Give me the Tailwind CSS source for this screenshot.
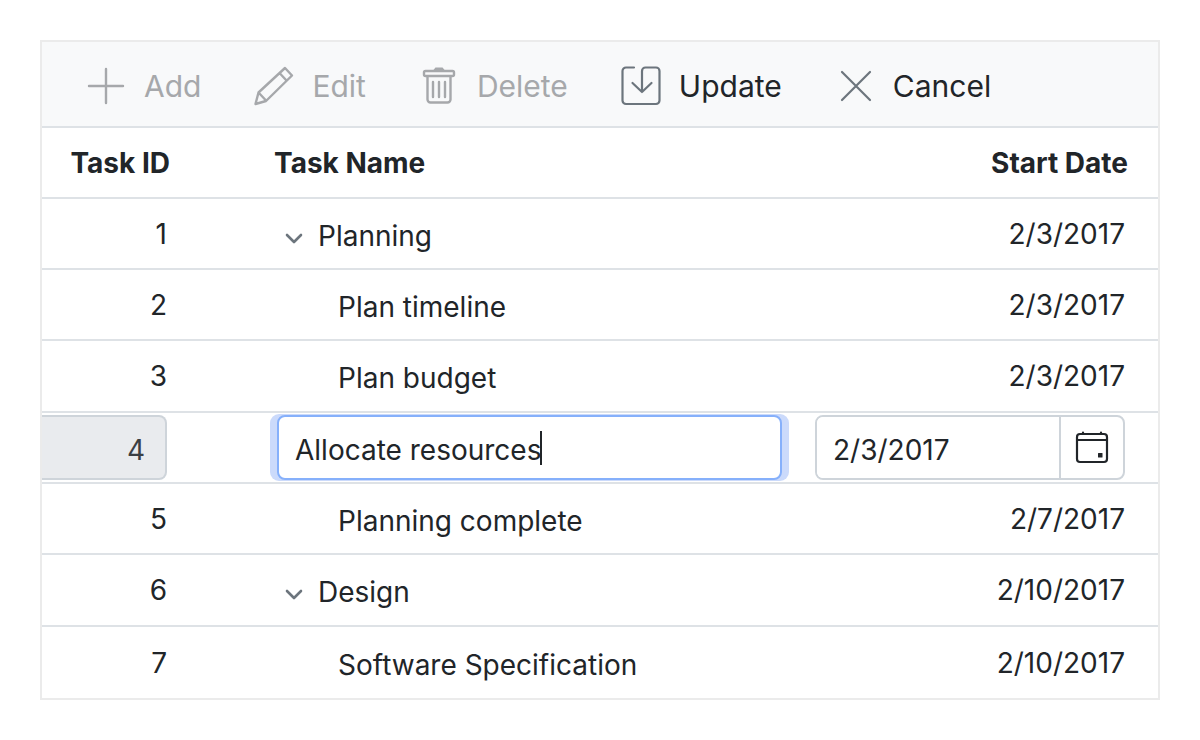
<!DOCTYPE html>
<html lang="en">
<head>
    <meta charset="UTF-8">
    <meta name="viewport" content="width=device-width, initial-scale=1.0">
    <title>Task Grid</title>
    <script src="https://cdn.jsdelivr.net/npm/@tailwindcss/browser@4"></script>
</head>
<body class="bg-white p-10 font-['Inter',sans-serif] text-[28px] leading-[34px] text-[#212529]">

    <div class="border-2 border-[#ebebeb] overflow-hidden">

        <!-- Toolbar -->
        <div class="flex items-center gap-[53px] h-[86px] pl-11 pt-[3px] bg-[#f8f9fa] border-b-2 border-[#dee2e6] text-[30px]" role="toolbar" aria-label="Grid actions">
            <button type="button" disabled class="flex items-center gap-[18px] text-[#a6a8ab]">
                <svg class="w-10 h-10" viewBox="0 0 40 40" fill="none" stroke="currentColor" stroke-width="2.4" stroke-linecap="round">
                    <path d="M20 3v34M3 20h34"/>
                </svg>
                <span>Add</span>
            </button>
            <button type="button" disabled class="flex items-center gap-[18px] text-[#a6a8ab]">
                <svg class="w-10 h-10" viewBox="0 0 40 40" fill="none" stroke="currentColor" stroke-width="2.4" stroke-linejoin="round">
                    <path d="M1.5 38l3-11.500L31 2l7 7.500L12 35zM4.500 26.500L12 34.500M25.500 7l7 7.500"/>
                </svg>
                <span>Edit</span>
            </button>
            <button type="button" disabled class="flex items-center gap-[18px] text-[#a6a8ab]">
                <svg class="w-10 h-10" viewBox="0 0 40 40" fill="none" stroke="currentColor" stroke-width="2.4" stroke-linecap="round">
                    <rect x="5" y="5" width="30" height="5" rx="1.5"/>
                    <path d="M16 4l1-1.200h6l1 1.200z" fill="currentColor"/>
                    <path d="M8.500 10.500v23a3 3 0 0 0 3 3h17a3 3 0 0 0 3-3v-23M14 16v15M20 16v15M26 16v15"/>
                </svg>
                <span>Delete</span>
            </button>
            <button type="button" class="flex items-center gap-[18px]">
                <svg class="w-10 h-10 text-[#6c757d]" viewBox="0 0 40 40" fill="none" stroke="currentColor" stroke-width="2.2" stroke-linecap="round" stroke-linejoin="round">
                    <path d="M13 1.500H5A3.500 3.500 0 0 0 1.500 5v29.500A3.500 3.500 0 0 0 5 38h30a3.500 3.500 0 0 0 3.500-3.500V5A3.500 3.500 0 0 0 35 1.500H24.500A3.500 3.500 0 0 0 21 5v21M11.500 17l9.500 9 9.500-9"/>
                </svg>
                <span>Update</span>
            </button>
            <button type="button" class="flex items-center gap-[18px]">
                <svg class="w-10 h-10 text-[#6c757d]" viewBox="0 0 40 40" fill="none" stroke="currentColor" stroke-width="2.2" stroke-linecap="round">
                    <path d="M7 6l28 28M35 6L7 34"/>
                </svg>
                <span>Cancel</span>
            </button>
        </div>

        <!-- Tree grid -->
        <table class="w-full table-fixed border-collapse">
            <colgroup>
                <col class="w-[220px]">
                <col>
                <col class="w-[355px]">
            </colgroup>
            <thead>
                <tr class="h-[70px] border-b-2 border-[#dee2e6]">
                    <th scope="col" class="pr-[92px] text-right font-bold whitespace-nowrap">Task ID</th>
                    <th scope="col" class="pl-3 text-left font-bold">Task Name</th>
                    <th scope="col" class="pr-[30px] text-right font-bold">Start Date</th>
                </tr>
            </thead>
            <tbody>
                <tr class="h-[71px] border-b-2 border-[#dee2e6]">
                    <td class="pr-[95px] text-right">1</td>
                    <td class="pl-5 pt-1">
                        <button type="button" aria-expanded="true" class="flex items-center gap-3">
                            <svg class="w-6 h-6 text-[#6c757d]" viewBox="0 0 24 24" fill="none" stroke="currentColor" stroke-width="2.6" stroke-linecap="round" stroke-linejoin="round"><path d="M5 11l7 7 7-7"/></svg>
                            <span>Planning</span>
                        </button>
                    </td>
                    <td class="pr-[33px] text-right">2/3/2017</td>
                </tr>
                <tr class="h-[71px] border-b-2 border-[#dee2e6]">
                    <td class="pr-[95px] text-right">2</td>
                    <td class="pl-[76px] pt-1">Plan timeline</td>
                    <td class="pr-[33px] text-right">2/3/2017</td>
                </tr>
                <tr class="h-[72px] border-b-2 border-[#dee2e6]">
                    <td class="pr-[95px] text-right">3</td>
                    <td class="pl-[76px] pt-1">Plan budget</td>
                    <td class="pr-[33px] text-right">2/3/2017</td>
                </tr>
                <!-- Row in edit mode -->
                <tr class="h-[71px] border-b-2 border-[#dee2e6]">
                    <td class="pr-[95px]">
                        <input type="text" value="4" disabled aria-label="Task ID" class="block w-full h-[65px] pr-5 pt-1 text-right bg-[#e9ebee] text-[#3b3f44] border-2 border-l-0 border-[#ced4da] rounded-r-lg">
                    </td>
                    <td class="pl-[15px] pr-[21px]">
                        <div class="relative">
                            <input type="text" value="Allocate resources" aria-label="Task Name" class="block w-full h-[65px] px-4 pt-1 bg-white border-2 border-[#86b0fb] rounded-lg outline-none shadow-[-6px_0_0_1px_#cbdafb,6px_0_0_1px_#cbdafb]">
                            <span class="absolute left-[263px] top-4 w-[2px] h-[34px] bg-[#212529]"></span>
                        </div>
                    </td>
                    <td class="pl-3 pr-[33px]">
                        <div class="flex h-[65px] border-2 border-[#ced4da] rounded-lg overflow-hidden">
                            <input type="text" value="2/3/2017" aria-label="Start Date" class="flex-1 min-w-0 px-4 pt-1 bg-white outline-none">
                            <button type="button" aria-label="Open calendar" class="flex items-center justify-center w-16 border-l-2 border-[#ced4da]">
                                <svg class="w-9 h-9" viewBox="0 0 36 36" fill="none" stroke="currentColor" stroke-width="2.2" stroke-linecap="round">
                                    <rect x="3" y="4" width="30" height="28" rx="3"/>
                                    <path d="M3 10h30M9 2.500V4M27 2.500V4"/>
                                    <rect x="24" y="23" width="4.500" height="4.500" rx="0.500" fill="currentColor" stroke="none"/>
                                </svg>
                            </button>
                        </div>
                    </td>
                </tr>
                <tr class="h-[71px] border-b-2 border-[#dee2e6]">
                    <td class="pr-[95px] text-right">5</td>
                    <td class="pl-[76px] pt-1">Planning complete</td>
                    <td class="pr-[33px] text-right">2/7/2017</td>
                </tr>
                <tr class="h-[72px] border-b-2 border-[#dee2e6]">
                    <td class="pr-[95px] text-right">6</td>
                    <td class="pl-5 pt-1">
                        <button type="button" aria-expanded="true" class="flex items-center gap-3">
                            <svg class="w-6 h-6 text-[#6c757d]" viewBox="0 0 24 24" fill="none" stroke="currentColor" stroke-width="2.6" stroke-linecap="round" stroke-linejoin="round"><path d="M5 11l7 7 7-7"/></svg>
                            <span>Design</span>
                        </button>
                    </td>
                    <td class="pr-[33px] text-right">2/10/2017</td>
                </tr>
                <tr class="h-[72px]">
                    <td class="pr-[95px] text-right">7</td>
                    <td class="pl-[76px] pt-1">Software Specification</td>
                    <td class="pr-[33px] text-right">2/10/2017</td>
                </tr>
            </tbody>
        </table>
    </div>

</body>
</html>
